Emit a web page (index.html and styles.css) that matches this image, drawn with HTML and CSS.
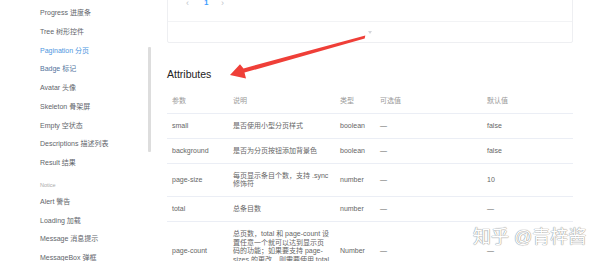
FILE: index.html
```html
<!DOCTYPE html>
<html lang="zh">
<head>
  <meta charset="utf-8">
  <title>Pagination 分页</title>
  <link rel="stylesheet" href="styles.css">
</head>
<body>
  <div class="page">
    <div class="sidebar">
      <ul class="nav">
        <li>Progress 进度条</li>
        <li>Tree 树形控件</li>
        <li class="active">Pagination 分页</li>
        <li class="hover">Badge 标记</li>
        <li>Avatar 头像</li>
        <li>Skeleton 骨架屏</li>
        <li>Empty 空状态</li>
        <li>Descriptions 描述列表</li>
        <li>Result 结果</li>
      </ul>
      <div class="nav-group">Notice</div>
      <ul class="nav">
        <li>Alert 警告</li>
        <li>Loading 加载</li>
        <li>Message 消息提示</li>
        <li>MessageBox 弹框</li>
      </ul>
      <div class="scroll-thumb"></div>
    </div>

    <div class="main">
      <div class="demo">
        <div class="demo-body">
          <span class="pager-btn">&lsaquo;</span>
          <span class="pager-num">1</span>
          <span class="pager-btn">&rsaquo;</span>
        </div>
        <div class="demo-control"><span class="caret"></span></div>
      </div>

      <h3>Attributes</h3>

      <table class="attrs">
        <thead>
          <tr><th class="c1">参数</th><th class="c2">说明</th><th class="c3">类型</th><th class="c4">可选值</th><th class="c5">默认值</th></tr>
        </thead>
        <tbody>
          <tr><td>small</td><td>是否使用小型分页样式</td><td>boolean</td><td>—</td><td>false</td></tr>
          <tr><td>background</td><td>是否为分页按钮添加背景色</td><td>boolean</td><td>—</td><td>false</td></tr>
          <tr><td>page-size</td><td>每页显示条目个数，支持 .sync 修饰符</td><td>number</td><td>—</td><td>10</td></tr>
          <tr><td>total</td><td>总条目数</td><td>number</td><td>—</td><td>—</td></tr>
          <tr><td>page-count</td><td>总页数，total 和 page-count 设置任意一个就可以达到显示页码的功能；如果要支持 page-sizes 的更改，则需要使用 total 属性</td><td>Number</td><td>—</td><td>—</td></tr>
        </tbody>
      </table>
    </div>
  </div>

  <svg class="arrow" width="600" height="261" viewBox="0 0 600 261">
    <polygon points="365.3,35.6 243.5,68.4 240,64.3 230,75 246,78.6 244.5,72.6 364.7,38.4" fill="#ef3f38"/>
  </svg>

  <div class="watermark">知乎 @青梓酱</div>
</body>
</html>
```

FILE: styles.css
```css
body {
  margin: 0;
  background: #fff;
  font-family: "Liberation Sans", "Noto Sans CJK SC", sans-serif;
  color: #606266;
  overflow: hidden;
}
.page {
  display: flex;
  height: 261px;
}

/* side navigation */
.sidebar {
  position: relative;
  width: 155px;
  flex: none;
  padding-top: 4px;
  box-sizing: border-box;
}
.nav { list-style: none; margin: 0; padding: 0 0 0 40px; }
.nav li {
  font-size: 7px;
  line-height: 18.75px;
  height: 18.75px;
  color: #62656b;
  white-space: nowrap;
}
.nav li.active { color: #4c95e0; }
.nav li.hover { color: #52729c; }
.nav-group {
  padding-left: 40px;
  margin: 7px 0 3px;
  font-size: 5.5px;
  line-height: 10px;
  color: #aaa;
}
.scroll-thumb {
  position: absolute;
  left: 148px;
  top: 47px;
  width: 3px;
  height: 105px;
  background: #ddd;
  border-radius: 1px;
}

/* content */
.main {
  padding-left: 12px;
  width: 406px;
}
.demo {
  margin-top: -12px;
  border: 1px solid #eeeff2;
  border-radius: 2px;
}
.demo-body {
  height: 32px;
  display: flex;
  align-items: flex-start;
  padding: 9px 0 0 18px;
  box-sizing: border-box;
  font-size: 8px;
  line-height: 10px;
}
.pager-btn { color: #c0c4cc; width: 18px; font-size: 9px; }
.pager-num { color: #409eff; width: 17px; font-weight: bold; }
.demo-control {
  height: 20px;
  border-top: 1px solid #f2f3f5;
  display: flex;
  align-items: center;
  justify-content: center;
}
.caret {
  width: 0;
  height: 0;
  border-left: 2.5px solid transparent;
  border-right: 2.5px solid transparent;
  border-top: 3px solid #d3d6db;
}

h3 {
  margin: 24px 0 8px;
  font-size: 10.5px;
  line-height: 14px;
  font-weight: normal;
  color: #222;
}

.attrs {
  width: 406px;
  border-collapse: collapse;
  font-size: 7px;
  line-height: 8.6px;
}
.attrs th, .attrs td {
  text-align: left;
  padding: 7.7px 5px;
  border-bottom: 1px solid #ebeef5;
  vertical-align: middle;
}
.attrs th { font-weight: normal; color: #999; }
.attrs td { color: #666; }
.c1 { width: 51px; }
.c2 { width: 97px; }
.c3 { width: 30px; }
.c4 { width: 97px; }

/* overlays */
.arrow {
  position: absolute;
  left: 0;
  top: 0;
  pointer-events: none;
}
.watermark {
  position: absolute;
  left: 473px;
  top: 226px;
  font-size: 18px;
  line-height: 22px;
  color: #fff;
  text-shadow: 0 0 1px #8a8a8a, 0 0 1px #8a8a8a;
  white-space: nowrap;
}
```
